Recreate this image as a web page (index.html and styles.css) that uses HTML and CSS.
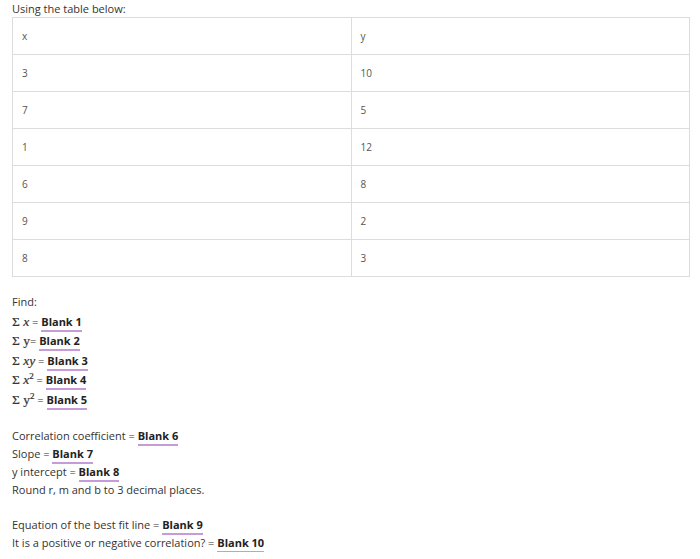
FILE: index.html
```html
<!DOCTYPE html>
<html>
<head>
<meta charset="utf-8">
<link rel="stylesheet" href="styles.css">
</head>
<body>
<p class="intro">Using the table below:</p>
<table class="data">
  <tr><td>x</td><td>y</td></tr>
  <tr><td>3</td><td>10</td></tr>
  <tr><td>7</td><td>5</td></tr>
  <tr><td>1</td><td>12</td></tr>
  <tr><td>6</td><td>8</td></tr>
  <tr><td>9</td><td>2</td></tr>
  <tr><td>8</td><td>3</td></tr>
</table>
<div class="find">
  <div>Find:</div>
  <div class="sum"><span class="m">Σ <i>x</i></span> = <span class="blank">Blank 1</span></div>
  <div class="sum"><span class="m">Σ y</span>= <span class="blank">Blank 2</span></div>
  <div class="sum"><span class="m">Σ <i>xy</i></span> = <span class="blank">Blank 3</span></div>
  <div class="sum"><span class="m">Σ <i>x</i><sup>2</sup></span> = <span class="blank">Blank 4</span></div>
  <div class="sum"><span class="m">Σ y<sup>2</sup></span> = <span class="blank">Blank 5</span></div>
</div>
<div class="lines">
  <div>Correlation coefficient = <span class="blank">Blank 6</span></div>
  <div>Slope = <span class="blank">Blank 7</span></div>
  <div>y intercept = <span class="blank">Blank 8</span></div>
  <div>Round r, m and b to 3 decimal places.</div>
</div>
<div class="lines second">
  <div>Equation of the best fit line = <span class="blank">Blank 9</span></div>
  <div>It is a positive or negative correlation? = <span class="blank">Blank 10</span></div>
</div>
</body>
</html>
```
FILE: styles.css
```css
body {
  margin: 0;
  padding: 0 11px 0 12px;
  font-family: "Open Sans", "Liberation Sans", sans-serif;
  font-size: 11px;
  color: #333;
  background: #fff;
}
.intro {
  margin: 0;
  line-height: 17px;
}
.data {
  width: 678px;
  border-collapse: collapse;
  color: #555;
}
.data td {
  border: 1px solid #dcdcdc;
  height: 36px;
  padding: 0 0 0 9px;
  width: 50%;
  font-size: 10px;
}
.data td:first-child { width: 328px; }
.find {
  margin-top: 15px;
  line-height: 19.5px;
}
.m {
  font-family: "Liberation Serif", serif;
  font-size: 13.5px;
  color: #333;
  -webkit-text-stroke: 0.2px #333;
}
.m sup {
  font-size: 9px;
  line-height: 0;
  vertical-align: 5px;
}
.blank {
  font-weight: bold;
  color: #222;
  border-bottom: 2px solid #c79ad8;
  padding-bottom: 1px;
}
.lines {
  margin-top: 18px;
  line-height: 18px;
}
.lines.second { margin-top: 17px; }
```
